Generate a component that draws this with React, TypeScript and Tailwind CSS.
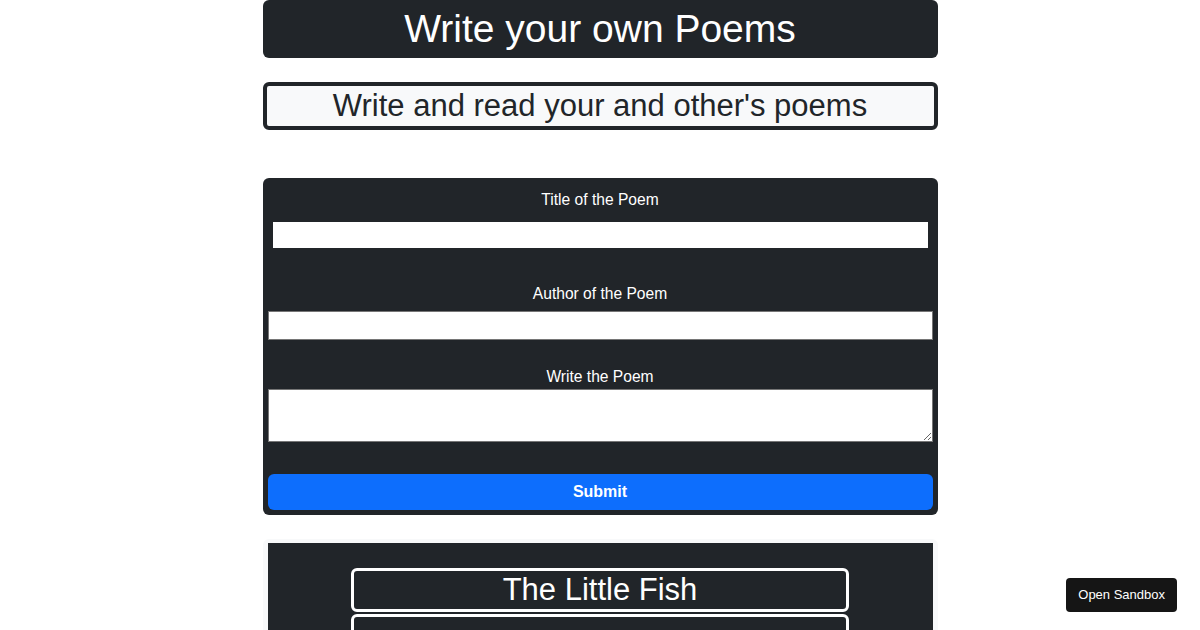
import React from "react";

interface Poem {
  id: number;
  title: string;
  author: string;
}

const poems: Poem[] = [{ id: 1, title: "The Little Fish", author: "" }];

const labelCls = "block text-center text-white text-[15.6px] leading-6";
const fieldCls = "block bg-white border border-[#767676] outline-none";

const App: React.FC = () => {
  return (
    <div className="min-h-[630px] bg-white font-['Liberation_Sans',Arial,sans-serif] text-[#212529]">
      <div className="mx-auto w-[675px]">
        <h1 className="bg-[#212529] text-white text-center text-[39px] leading-[48px] py-[5px] rounded-md">
          Write your own Poems
        </h1>

        <h2 className="mt-6 bg-[#f8f9fa] border-4 border-[#212529] rounded-md text-center text-[31px] leading-[40px]">
          Write and read your and other's poems
        </h2>

        <form
          className="mt-12 bg-[#212529] rounded-md px-[5px] pt-[10px] pb-[5px]"
          onSubmit={(e) => e.preventDefault()}
        >
          <label className={labelCls}>Title of the Poem</label>
          <input type="text" className="block bg-white mx-[5px] mt-[10px] h-[26px] w-[655px] outline-none" />

          <label className={`${labelCls} mt-[34px]`}>Author of the Poem</label>
          <input type="text" className={`${fieldCls} mt-[5px] h-[29px] w-full`} />

          <label className={`${labelCls} mt-[25px]`}>Write the Poem</label>
          <textarea className={`${fieldCls} mt-0 h-[53px] w-full`} />

          <button
            type="submit"
            className="mt-8 w-full h-9 bg-[#0d6efd] text-white font-bold text-base rounded-md"
          >
            Submit
          </button>
        </form>

        <div className="mt-[24px] border-[5px] border-t-4 border-[#f8f9fa] rounded-md">
          <div className="bg-[#212529] pt-[25px] pb-4">
            {poems.map((poem) => (
              <div key={poem.id} className="mx-auto w-3/4 flex flex-col gap-[2px]">
                <div className="border-[3px] border-white rounded-md text-white text-center text-[31px] leading-[38px]">
                  {poem.title}
                </div>
                <div className="border-[3px] border-white rounded-md text-white text-center text-[24px] leading-[38px]">
                  {poem.author || "\u00a0"}
                </div>
              </div>
            ))}
          </div>
        </div>
      </div>

      <button className="fixed right-[23px] bottom-[18px] bg-[#151515] text-white text-[13px] leading-4 px-3 py-[9px] rounded-[4px]">
        Open Sandbox
      </button>
    </div>
  );
};

export default App;
